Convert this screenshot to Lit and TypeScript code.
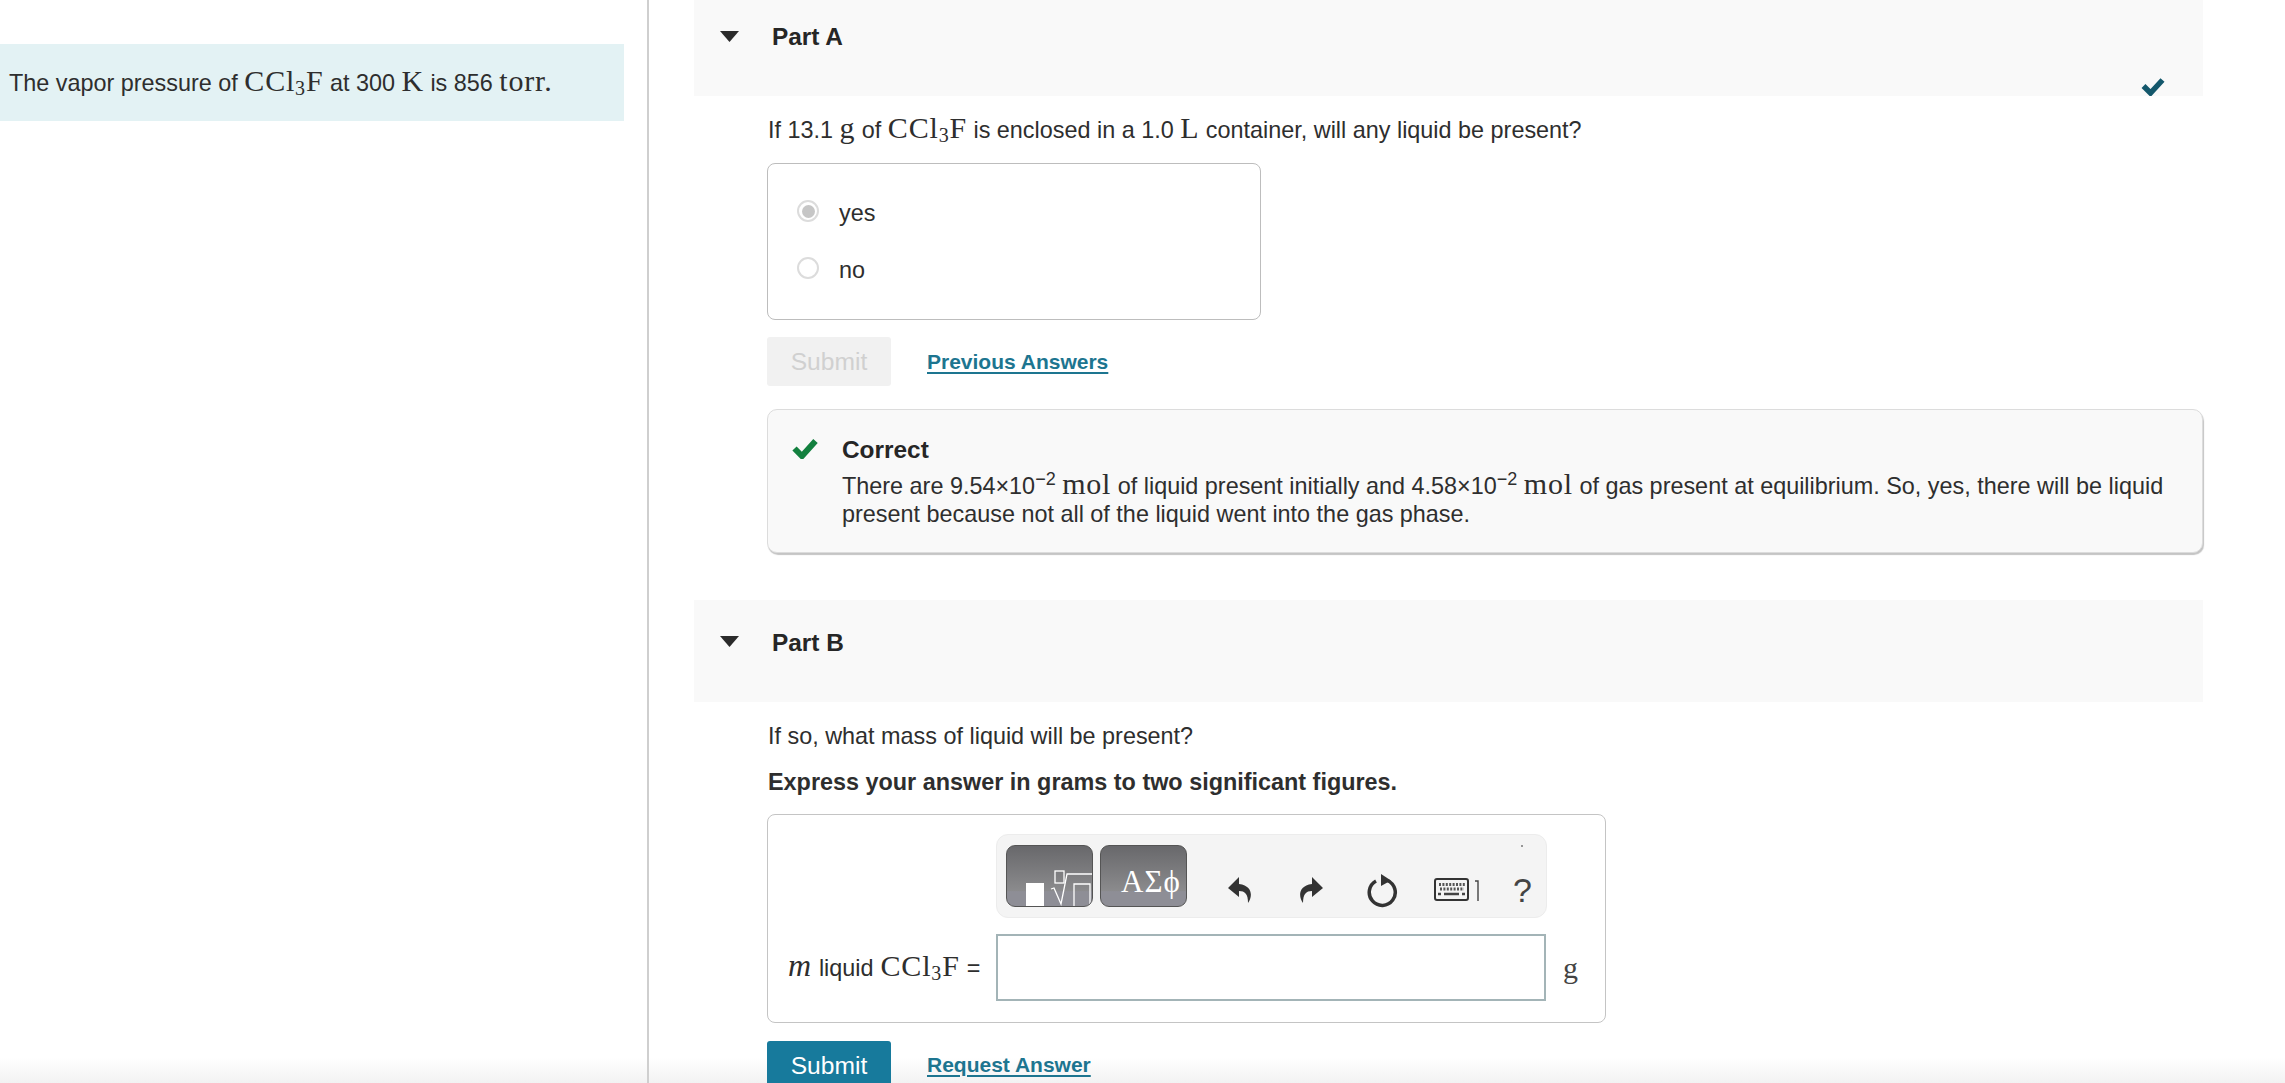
import { LitElement, html, css } from 'lit';
import { customElement } from 'lit/decorators.js';

const triangle = html`<svg class="tri" width="19" height="11" viewBox="0 0 19 11"><path d="M0 0H19L9.5 11Z" fill="#2b2b2b"/></svg>`;

// CCl3F in the math face, used three times
const ccl3f = html`<span class="m">CCl<sub>3</sub>F</span>`;

@customElement('app-root')
export class AppRoot extends LitElement {
  static styles = css`
    :host {
      display: block;
      position: relative;
      height: 1083px;
      overflow: hidden;
      background: #fff;
      color: #2e2e2e;
      font: 23.4px/28px 'Liberation Sans', Arial, sans-serif;
    }
    .page {
      position: relative;
      z-index: 1;
      display: grid;
      grid-template-columns: 647px 2px 1fr;
      height: 100%;
    }
    .side {
      padding-top: 44px;
    }
    .banner {
      width: 624px;
      height: 77px;
      box-sizing: border-box;
      padding: 25px 0 0 9px;
      background: #e3f2f4;
    }
    .rule {
      background: #cfcfcf;
    }
    .main {
      padding-left: 45px;
      width: 1509px;
    }
    .m {
      font-family: 'Liberation Serif', 'Times New Roman', serif;
      font-size: 30px;
      line-height: 0;
      letter-spacing: 0.8px;
    }
    .m sub {
      font-size: 20px;
      line-height: 0;
      vertical-align: -4px;
    }
    .m i {
      font-size: 32px;
    }
    .head {
      position: relative;
      display: flex;
      align-items: flex-start;
      gap: 33px;
      box-sizing: border-box;
      padding: 23px 0 0 26px;
      background: #f9f9f9;
      font-size: 24.4px;
      font-weight: 700;
      color: #262626;
    }
    .head.a {
      height: 96px;
    }
    .head.b {
      height: 102px;
      margin-top: 47px;
      padding-top: 29px;
    }
    .tri {
      margin-top: 8px;
      flex: none;
    }
    .head.b .tri {
      margin-top: 7px;
    }
    .done {
      position: absolute;
      left: 1447px;
      top: 76px;
    }
    .body {
      padding-left: 73px;
    }
    .q {
      margin-top: 20px;
      padding-left: 1px;
    }
    .q.sec {
      margin-top: 20px;
    }
    .q.bold {
      margin-top: 18px;
      font-weight: 700;
    }
    .choices {
      box-sizing: border-box;
      width: 494px;
      height: 157px;
      margin-top: 19px;
      padding: 20px 0 0 29px;
      border: 1px solid #bdbdbd;
      border-radius: 8px;
    }
    .choice {
      display: flex;
      align-items: center;
      gap: 20px;
      height: 57px;
    }
    .radio {
      display: grid;
      place-items: center;
      box-sizing: border-box;
      width: 22px;
      height: 22px;
      margin-top: -3px;
      border: 2px solid #dcdcdc;
      border-radius: 50%;
    }
    .radio.on::after {
      content: '';
      width: 13px;
      height: 13px;
      border-radius: 50%;
      background: #c6c6c6;
    }
    .actions {
      display: flex;
      align-items: center;
      gap: 36px;
      height: 49px;
      margin-top: 17px;
    }
    .submit {
      display: grid;
      place-items: center;
      width: 124px;
      height: 49px;
      border-radius: 3px;
      background: #177a9c;
      color: #fff;
      font-size: 24.6px;
    }
    .submit.off {
      background: #f1f1f1;
      color: #d0d0d0;
    }
    .link {
      color: #1d7590;
      font-size: 21px;
      font-weight: 700;
      text-decoration: underline;
      text-underline-offset: 3px;
    }
    .feedback {
      display: grid;
      grid-template-columns: 26px 1fr;
      column-gap: 24px;
      box-sizing: border-box;
      height: 144px;
      margin-top: 23px;
      padding: 26px 24px 0 24px;
      border: 1px solid #dcdcdc;
      border-radius: 10px;
      background: #f9f9f9;
      box-shadow: 1px 2px 1px #c4c4c4;
    }
    .feedback svg {
      margin-top: 2px;
    }
    .feedback b {
      display: block;
      margin-bottom: 8px;
      font-size: 24.4px;
      color: #262626;
    }
    .feedback sup {
      font-size: 18px;
      line-height: 0;
    }
    .answer {
      display: grid;
      grid-template-columns: 208px 552px 1fr;
      grid-template-rows: 84px 67px;
      row-gap: 16px;
      box-sizing: border-box;
      width: 839px;
      height: 209px;
      margin-top: 18px;
      padding: 19px 0 0 20px;
      border: 1px solid #c4c4c4;
      border-radius: 8px;
    }
    .tools {
      grid-column: 2;
      display: flex;
      align-items: flex-start;
      position: relative;
      box-sizing: border-box;
      margin-right: 1px;
      padding: 10px 0 0 9px;
      border: 1px solid #ececec;
      border-radius: 12px;
      background: #f4f4f4;
    }
    .tool {
      position: relative;
      box-sizing: border-box;
      width: 87px;
      height: 62px;
      margin-right: 7px;
      overflow: hidden;
      border: 1px solid #555;
      border-radius: 9px;
      background: linear-gradient(#68686b, #8b8b8d 75%, #8e8e96 76%, #8e8e96);
      color: #fff;
    }
    .tool svg {
      display: block;
    }
    .greek {
      display: block;
      padding: 19px 0 0 20px;
      font: 31px/34px 'Liberation Serif', serif;
      letter-spacing: 1px;
    }
    .icons {
      display: flex;
      align-items: center;
      height: 62px;
      padding-top: 28px;
      box-sizing: border-box;
    }
    .help {
      font: 34px/34px 'Liberation Sans', sans-serif;
      color: #444;
      margin-left: 31px;
    }
    .speck {
      position: absolute;
      top: 10px;
      left: 524px;
      width: 2px;
      height: 2px;
      border-radius: 50%;
      background: #777;
    }
    .label {
      grid-column: 1;
      align-self: center;
      display: flex;
      align-items: baseline;
      gap: 7px;
      white-space: nowrap;
    }
    .input {
      grid-column: 2;
      margin-right: 2px;
      border: 2px solid #a3b4b7;
    }
    .unit {
      grid-column: 3;
      align-self: center;
      padding-left: 15px;
      font: 30px/30px 'Liberation Serif', serif;
      color: #444;
    }
    .actions.last {
      margin-top: 18px;
    }
    .actions.last .link {
      margin-top: -2px;
    }
    .fade {
      position: absolute;
      left: 0;
      right: 0;
      bottom: 0;
      height: 26px;
      background: linear-gradient(rgba(235, 235, 235, 0), rgba(235, 235, 235, 0.65));
    }
  `;

  render() {
    return html`
      <div class="fade"></div>
      <div class="page">
        <aside class="side">
          <div class="banner">The vapor pressure of ${ccl3f} at 300 <span class="m">K</span> is 856 <span class="m">torr.</span></div>
        </aside>
        <div class="rule"></div>
        <main class="main">
          <section class="head a">
            ${triangle}<span>Part A</span>
            <svg class="done" width="24" height="20" viewBox="0 0 24 20"><path d="M2.5 10l7 7L21.5 4" fill="none" stroke="#14586c" stroke-width="5.5"/></svg>
          </section>
          <div class="body">
            <div class="q">If 13.1 <span class="m">g</span> of ${ccl3f} is enclosed in a 1.0 <span class="m">L</span> container, will any liquid be present?</div>
            <div class="choices">
              <div class="choice"><span class="radio on"></span>yes</div>
              <div class="choice"><span class="radio"></span>no</div>
            </div>
            <div class="actions">
              <span class="submit off">Submit</span>
              <span class="link">Previous Answers</span>
            </div>
            <div class="feedback">
              <svg width="26" height="21" viewBox="0 0 26 21"><path d="M2.5 10.5l7.5 7.5L23.5 3" fill="none" stroke="#13803f" stroke-width="6"/></svg>
              <div>
                <b>Correct</b>
                There are 9.54×10<sup>−2</sup> <span class="m">mol</span> of liquid present initially and 4.58×10<sup>−2</sup> <span class="m">mol</span> of gas present at equilibrium. So, yes, there will be liquid present because not all of the liquid went into the gas phase.
              </div>
            </div>
          </div>
          <section class="head b">${triangle}<span>Part B</span></section>
          <div class="body">
            <div class="q sec">If so, what mass of liquid will be present?</div>
            <div class="q bold">Express your answer in grams to two significant figures.</div>
            <div class="answer">
              <div class="tools">
                <span class="tool">
                  <svg width="85" height="60" viewBox="0 0 85 60" fill="none" stroke="#fff" stroke-width="1.3">
                    <rect x="19" y="37" width="18" height="23" fill="#fff" stroke="none"/>
                    <rect x="48" y="25" width="9" height="12"/>
                    <path d="M44 43l3-1 7 16 6-30h25"/>
                    <path d="M67 60V38h16V60"/>
                  </svg>
                </span>
                <span class="tool"><span class="greek">ΑΣϕ</span></span>
                <div class="icons">
                  <svg width="26" height="30" viewBox="0 0 26 30" style="margin-left:33px"><path d="M12 2L1 13l11 9v-6c6 0 9 3 9 12 4-5 6-17-9-19z" fill="#333"/></svg>
                  <svg width="26" height="30" viewBox="0 0 26 30" style="margin-left:45px"><path d="M14 2l11 11-11 9v-6c-6 0-9 3-9 12-4-5-6-17 9-19z" fill="#333"/></svg>
                  <svg width="32" height="36" viewBox="0 0 32 36" style="margin-left:43px;margin-top:2px"><path d="M20.5 7.5A13 13 0 1 1 9 8" fill="none" stroke="#333" stroke-width="3.5"/><path d="M14 1l10 6.5L14 13z" fill="#333"/></svg>
                  <svg width="48" height="24" viewBox="0 0 48 24" style="margin-left:35px" fill="none">
                    <rect x="1" y="1" width="33" height="21" rx="2" stroke="#333" stroke-width="2"/>
                    <path d="M5 6.5h26M6 11h24" stroke="#555" stroke-width="3" stroke-dasharray="2 1.4"/>
                    <path d="M4 16h3M10 16h15M28 16h3" stroke="#444" stroke-width="2.5"/>
                    <path d="M41 3h3v20" stroke="#444" stroke-width="1.4"/>
                  </svg>
                  <span class="help">?</span>
                </div>
                <i class="speck"></i>
              </div>
              <div class="label"><span class="m"><i>m</i></span><span>liquid</span>${ccl3f}<span>=</span></div>
              <div class="input"></div>
              <div class="unit">g</div>
            </div>
            <div class="actions last">
              <span class="submit">Submit</span>
              <span class="link">Request Answer</span>
            </div>
          </div>
        </main>
      </div>
    `;
  }
}
